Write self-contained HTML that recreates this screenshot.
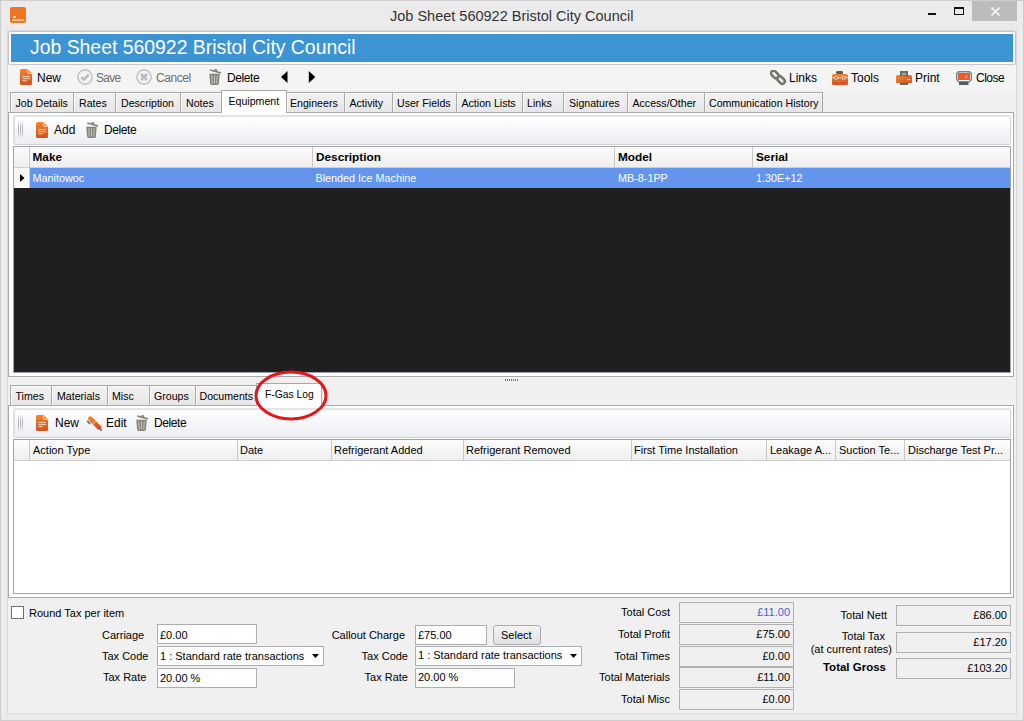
<!DOCTYPE html>
<html><head><meta charset="utf-8">
<style>
html,body{margin:0;padding:0;}
body{width:1024px;height:721px;overflow:hidden;position:relative;background:#ebebeb;font-family:"Liberation Sans",sans-serif;font-size:11px;color:#000;}
div,span,svg{box-sizing:border-box;}
.a{position:absolute;}
.t{position:absolute;white-space:nowrap;line-height:1;}
</style></head>
<body>
<div class="a" style="left:0px;top:0px;width:1024px;height:721px;border:1px solid #cdcdcd;background:#ebebeb;"></div>
<div class="a" style="left:10px;top:7px;width:16px;height:16px;background:#f07322;border-radius:2px;"></div>
<div class="a" style="left:13px;top:16px;width:3px;height:2px;background:#fbd9c0;"></div>
<div class="a" style="left:12px;top:19px;width:12px;height:2px;background:#f8c4a0;"></div>
<div class="t" style="left:390px;top:8.73px;font-size:14.5px;color:#333;">Job Sheet 560922 Bristol City Council</div>
<div class="a" style="left:928px;top:13px;width:8px;height:2px;background:#111;"></div>
<div class="a" style="left:954px;top:7px;width:10px;height:8px;border:1px solid #111;border-top-width:2px;"></div>
<div class="a" style="left:972px;top:1px;width:45px;height:20px;background:#bcbcbc;"></div>
<svg class="a" style="left:989.5px;top:6px" width="11" height="11"><path d="M1.5 1.5L9.5 9.5M9.5 1.5L1.5 9.5" stroke="#fff" stroke-width="1.5"/></svg>
<div class="a" style="left:7px;top:30px;width:1010px;height:684px;border:1px solid #d9d9d9;background:#f0f0f0;"></div>
<div class="a" style="left:8px;top:31px;width:1008px;height:34px;border:1px solid #c5c6cc;border-radius:2px;background:#fdfafa;"></div>
<div class="a" style="left:11px;top:34px;width:1002px;height:28px;background:#3d94d2;"></div>
<div class="t" style="left:30px;top:37.58px;font-size:19.4px;color:#fff;">Job Sheet 560922 Bristol City Council</div>
<div class="a" style="left:8px;top:65px;width:1008px;height:25px;background:#f4f4f4;"></div>
<svg class="a" style="left:20px;top:69px" width="12" height="16" viewBox="0 0 12 16"><defs><linearGradient id="og1" x1="0" y1="0" x2="0" y2="1"><stop offset="0" stop-color="#f5852a"/><stop offset="1" stop-color="#d24f1f"/></linearGradient></defs><path d="M1.5 0H7.5L12 4.5V14.5Q12 16 10.5 16H1.5Q0 16 0 14.5V1.5Q0 0 1.5 0Z" fill="url(#og1)"/><path d="M7.6 0.6V3.2Q7.6 4.4 8.8 4.4H11.6" stroke="#f7cfb3" stroke-width="1.1" fill="none"/><rect x="2.3" y="7" width="7.6" height="1.1" fill="#f8d2b8"/><rect x="2.3" y="9.1" width="7.6" height="1.1" fill="#f6ccb0"/><rect x="2.3" y="11.2" width="4.6" height="1.1" fill="#f2c2a4"/></svg>
<div class="t" style="left:37px;top:71.84px;font-size:12px;color:#000;">New</div>
<svg class="a" style="left:77px;top:69px" width="16" height="16" viewBox="0 0 16 16"><circle cx="8" cy="8" r="7.1" fill="none" stroke="#c4c4c4" stroke-width="1.6"/><path d="M4.3 8.2L6.9 10.7L11.8 5.6" fill="none" stroke="#bdbdbd" stroke-width="2.4"/></svg>
<div class="t" style="left:96px;top:71.84px;font-size:12px;color:#6e6e6e;letter-spacing:-0.7px;">Save</div>
<svg class="a" style="left:136px;top:69px" width="16" height="16" viewBox="0 0 16 16"><circle cx="8" cy="8" r="7.1" fill="none" stroke="#c4c4c4" stroke-width="1.6"/><path d="M5 5L11 11M11 5L5 11" fill="none" stroke="#bdbdbd" stroke-width="2.6"/></svg>
<div class="t" style="left:156px;top:71.84px;font-size:12px;color:#6e6e6e;letter-spacing:-0.45px;">Cancel</div>
<svg class="a" style="left:209px;top:69px" width="12" height="16" viewBox="0 0 12 16"><path d="M2 1.2L11.4 3.8" stroke="#7e7d75" stroke-width="1.7" stroke-linecap="round"/><path d="M5.6 1.9L6.2 0.6L7.6 1L7.4 2.4" stroke="#7e7d75" stroke-width="1.2" fill="none"/><path d="M0.3 4.8H10.7L9.9 14.6Q9.7 16 8.3 16H2.7Q1.3 16 1.1 14.6Z" fill="#82817a"/><path d="M2.8 6.3L3.2 14.6M5.5 6.3V14.6M8.2 6.3L7.8 14.6" stroke="#c6c5be" stroke-width="1.1"/></svg>
<div class="t" style="left:227px;top:71.84px;font-size:12px;color:#000;letter-spacing:-0.4px;">Delete</div>
<svg class="a" style="left:280px;top:70px" width="9" height="14"><path d="M7.5 1V13L1 7Z" fill="#000"/></svg>
<svg class="a" style="left:308px;top:70px" width="9" height="14"><path d="M0.8 1V13L7.3 7Z" fill="#000"/></svg>
<svg class="a" style="left:770px;top:70px" width="17" height="16" viewBox="0 0 17 16"><g fill="none" stroke="#75746b" stroke-width="2.5"><rect x="0.5" y="2" width="8.6" height="5" rx="2.5" transform="rotate(45 4.8 4.5)"/><rect x="6.7" y="7.5" width="8.6" height="5" rx="2.5" transform="rotate(45 11 10)"/></g></svg>
<div class="t" style="left:789px;top:71.84px;font-size:12px;color:#000;">Links</div>
<svg class="a" style="left:832px;top:71px" width="16" height="14" viewBox="0 0 16 14"><defs><linearGradient id="tg" x1="0" y1="0" x2="0" y2="1"><stop offset="0" stop-color="#f7892e"/><stop offset="1" stop-color="#d4501f"/></linearGradient></defs><path d="M4.2 3.5V1.2Q4.2 0 5.4 0H9.8Q11 0 11 1.2V3.5Z" fill="#5c5c58"/><rect x="0" y="3" width="16" height="11" rx="1.6" fill="url(#tg)"/><path d="M0 6.8H16" stroke="#e8d8cc" stroke-width="1"/><circle cx="4.2" cy="6.8" r="1.9" fill="#e8e4e0"/><circle cx="11.7" cy="6.8" r="1.9" fill="#e8e4e0"/><circle cx="4.2" cy="6.8" r="1.1" fill="#6f7a7e"/><circle cx="11.7" cy="6.8" r="1.1" fill="#6f7a7e"/></svg>
<div class="t" style="left:851px;top:71.84px;font-size:12px;color:#000;">Tools</div>
<svg class="a" style="left:896px;top:71px" width="16" height="14" viewBox="0 0 16 14"><defs><linearGradient id="pg" x1="0" y1="0" x2="1" y2="1"><stop offset="0" stop-color="#f7892e"/><stop offset="1" stop-color="#d4501f"/></linearGradient></defs><rect x="4" y="0" width="8" height="6" fill="#6f6f69"/><rect x="6" y="2" width="4" height="2" fill="#a8a8a2"/><path d="M1.5 4H4V5.3H12V4H14.5Q16 4 16 5.5V10.8Q16 12.3 14.5 12.3H1.5Q0 12.3 0 10.8V5.5Q0 4 1.5 4Z" fill="url(#pg)"/><rect x="11" y="8.2" width="3.5" height="1" fill="#f6e2d6"/><rect x="4" y="11.8" width="8" height="2.2" fill="#5f6a6a"/></svg>
<div class="t" style="left:915px;top:71.84px;font-size:12px;color:#000;">Print</div>
<svg class="a" style="left:956px;top:71px" width="16" height="14" viewBox="0 0 16 14"><path d="M2.5 0.7H13.5L15.3 2.5V8.8L13.5 10.6H2.5L0.7 8.8V2.5Z" fill="#fff" stroke="#6f8a8f" stroke-width="1.4"/><rect x="2" y="2" width="12" height="7" fill="#f05a24"/><path d="M8.6 7.6Q9.5 6 11.8 4.2Q11.2 6.8 9 7.3Z" fill="#fff"/><rect x="3" y="11" width="9.5" height="3" fill="#4d6266"/></svg>
<div class="t" style="left:976px;top:71.84px;font-size:12px;color:#000;letter-spacing:-0.5px;">Close</div>
<div class="a" style="left:8px;top:112px;width:1006px;height:265px;border:1px solid #a9a9a9;background:#fff;"></div>
<div class="a" style="left:10px;top:92px;width:64px;height:21px;border:1px solid #a9a9a9;background:linear-gradient(#f2f2f2,#e6e6e6);box-shadow:inset 1px 1px 0 #fafafa;"></div>
<div class="t" style="left:15.5px;top:98.03px;font-size:10.6px;color:#000;">Job Details</div>
<div class="a" style="left:73px;top:92px;width:43px;height:21px;border:1px solid #a9a9a9;background:linear-gradient(#f2f2f2,#e6e6e6);box-shadow:inset 1px 1px 0 #fafafa;"></div>
<div class="t" style="left:79px;top:98.03px;font-size:10.6px;color:#000;">Rates</div>
<div class="a" style="left:115px;top:92px;width:66px;height:21px;border:1px solid #a9a9a9;background:linear-gradient(#f2f2f2,#e6e6e6);box-shadow:inset 1px 1px 0 #fafafa;"></div>
<div class="t" style="left:121px;top:98.03px;font-size:10.6px;color:#000;">Description</div>
<div class="a" style="left:180px;top:92px;width:42px;height:21px;border:1px solid #a9a9a9;background:linear-gradient(#f2f2f2,#e6e6e6);box-shadow:inset 1px 1px 0 #fafafa;"></div>
<div class="t" style="left:186px;top:98.03px;font-size:10.6px;color:#000;">Notes</div>
<div class="a" style="left:286px;top:92px;width:59px;height:21px;border:1px solid #a9a9a9;background:linear-gradient(#f2f2f2,#e6e6e6);box-shadow:inset 1px 1px 0 #fafafa;"></div>
<div class="t" style="left:290px;top:98.03px;font-size:10.6px;color:#000;">Engineers</div>
<div class="a" style="left:344px;top:92px;width:49px;height:21px;border:1px solid #a9a9a9;background:linear-gradient(#f2f2f2,#e6e6e6);box-shadow:inset 1px 1px 0 #fafafa;"></div>
<div class="t" style="left:349.5px;top:98.03px;font-size:10.6px;color:#000;">Activity</div>
<div class="a" style="left:392px;top:92px;width:65px;height:21px;border:1px solid #a9a9a9;background:linear-gradient(#f2f2f2,#e6e6e6);box-shadow:inset 1px 1px 0 #fafafa;"></div>
<div class="t" style="left:397px;top:98.03px;font-size:10.6px;color:#000;">User Fields</div>
<div class="a" style="left:456px;top:92px;width:67px;height:21px;border:1px solid #a9a9a9;background:linear-gradient(#f2f2f2,#e6e6e6);box-shadow:inset 1px 1px 0 #fafafa;"></div>
<div class="t" style="left:461.5px;top:98.03px;font-size:10.6px;color:#000;">Action Lists</div>
<div class="a" style="left:522px;top:92px;width:42px;height:21px;border:1px solid #a9a9a9;background:linear-gradient(#f2f2f2,#e6e6e6);box-shadow:inset 1px 1px 0 #fafafa;"></div>
<div class="t" style="left:527px;top:98.03px;font-size:10.6px;color:#000;">Links</div>
<div class="a" style="left:563px;top:92px;width:65px;height:21px;border:1px solid #a9a9a9;background:linear-gradient(#f2f2f2,#e6e6e6);box-shadow:inset 1px 1px 0 #fafafa;"></div>
<div class="t" style="left:569px;top:98.03px;font-size:10.6px;color:#000;">Signatures</div>
<div class="a" style="left:627px;top:92px;width:78px;height:21px;border:1px solid #a9a9a9;background:linear-gradient(#f2f2f2,#e6e6e6);box-shadow:inset 1px 1px 0 #fafafa;"></div>
<div class="t" style="left:632.5px;top:98.03px;font-size:10.6px;color:#000;">Access/Other</div>
<div class="a" style="left:704px;top:92px;width:119px;height:21px;border:1px solid #a9a9a9;background:linear-gradient(#f2f2f2,#e6e6e6);box-shadow:inset 1px 1px 0 #fafafa;"></div>
<div class="t" style="left:709px;top:98.03px;font-size:10.6px;color:#000;">Communication History</div>
<div class="a" style="left:221px;top:90px;width:66px;height:23px;border:1px solid #a9a9a9;border-bottom:none;background:#fff;"></div>
<div class="t" style="left:228.5px;top:96.03px;font-size:10.6px;color:#000;">Equipment</div>
<div class="a" style="left:13px;top:115px;width:998px;height:30px;border:1px solid #e4e5e9;border-radius:2px;background:#fff;"></div>
<div class="a" style="left:14px;top:116px;width:997px;height:29px;border:1px solid #d0d2d8;border-top-color:#e2e3e7;border-left-color:#d8dae0;border-radius:2px;background:linear-gradient(#ffffff,#eceef2);"></div>
<div class="a" style="left:18px;top:120px;width:1px;height:19px;background:linear-gradient(rgba(180,182,192,0),#b4b6c0 35%,#b4b6c0 65%,rgba(180,182,192,0));"></div>
<div class="a" style="left:20px;top:120px;width:1px;height:19px;background:linear-gradient(rgba(180,182,192,0),#b4b6c0 35%,#b4b6c0 65%,rgba(180,182,192,0));"></div>
<div class="a" style="left:22px;top:120px;width:1px;height:19px;background:linear-gradient(rgba(180,182,192,0),#b4b6c0 35%,#b4b6c0 65%,rgba(180,182,192,0));"></div>
<svg class="a" style="left:36px;top:122px" width="12" height="16" viewBox="0 0 12 16"><defs><linearGradient id="og2" x1="0" y1="0" x2="0" y2="1"><stop offset="0" stop-color="#f5852a"/><stop offset="1" stop-color="#d24f1f"/></linearGradient></defs><path d="M1.5 0H7.5L12 4.5V14.5Q12 16 10.5 16H1.5Q0 16 0 14.5V1.5Q0 0 1.5 0Z" fill="url(#og2)"/><path d="M7.6 0.6V3.2Q7.6 4.4 8.8 4.4H11.6" stroke="#f7cfb3" stroke-width="1.1" fill="none"/><rect x="2.3" y="7" width="7.6" height="1.1" fill="#f8d2b8"/><rect x="2.3" y="9.1" width="7.6" height="1.1" fill="#f6ccb0"/><rect x="2.3" y="11.2" width="4.6" height="1.1" fill="#f2c2a4"/></svg>
<div class="t" style="left:54px;top:123.84px;font-size:12px;color:#000;">Add</div>
<svg class="a" style="left:86px;top:122px" width="12" height="16" viewBox="0 0 12 16"><path d="M2 1.2L11.4 3.8" stroke="#7e7d75" stroke-width="1.7" stroke-linecap="round"/><path d="M5.6 1.9L6.2 0.6L7.6 1L7.4 2.4" stroke="#7e7d75" stroke-width="1.2" fill="none"/><path d="M0.3 4.8H10.7L9.9 14.6Q9.7 16 8.3 16H2.7Q1.3 16 1.1 14.6Z" fill="#82817a"/><path d="M2.8 6.3L3.2 14.6M5.5 6.3V14.6M8.2 6.3L7.8 14.6" stroke="#c6c5be" stroke-width="1.1"/></svg>
<div class="t" style="left:104px;top:123.84px;font-size:12px;color:#000;letter-spacing:-0.4px;">Delete</div>
<div class="a" style="left:13px;top:146px;width:998px;height:227px;border:1px solid #a0a3ac;background:#1f1f1f;"></div>
<div class="a" style="left:14px;top:147px;width:996px;height:21px;background:linear-gradient(#fcfcfc,#eeeeee);border-bottom:1px solid #d0d0d0;"></div>
<div class="a" style="left:14px;top:168px;width:16px;height:20px;background:#f7f7f7;"></div>
<div class="a" style="left:30px;top:168px;width:980px;height:20px;background:#6495ed;"></div>
<div class="a" style="left:29px;top:147px;width:1px;height:21px;background:#c8c8c8;"></div>
<div class="a" style="left:312px;top:147px;width:1px;height:21px;background:#c8c8c8;"></div>
<div class="a" style="left:614px;top:147px;width:1px;height:21px;background:#c8c8c8;"></div>
<div class="a" style="left:752px;top:147px;width:1px;height:21px;background:#c8c8c8;"></div>
<div class="a" style="left:29px;top:168px;width:1px;height:20px;background:#d0d0d0;"></div>
<svg class="a" style="left:20px;top:174px" width="5" height="8"><path d="M0 0V8L4.5 4Z" fill="#000"/></svg>
<div class="t" style="left:32.5px;top:152.01px;font-size:11.8px;color:#000;font-weight:bold;">Make</div>
<div class="t" style="left:316px;top:152.01px;font-size:11.8px;color:#000;font-weight:bold;">Description</div>
<div class="t" style="left:618px;top:152.01px;font-size:11.8px;color:#000;font-weight:bold;">Model</div>
<div class="t" style="left:756px;top:152.01px;font-size:11.8px;color:#000;font-weight:bold;">Serial</div>
<div class="t" style="left:32.5px;top:172.86px;font-size:10.8px;color:#fff;">Manitowoc</div>
<div class="t" style="left:315.5px;top:172.86px;font-size:10.8px;color:#fff;">Blended Ice Machine</div>
<div class="t" style="left:618px;top:172.86px;font-size:10.8px;color:#fff;">MB-8-1PP</div>
<div class="t" style="left:756px;top:172.86px;font-size:10.8px;color:#fff;">1.30E+12</div>
<div class="a" style="left:505px;top:379px;width:1px;height:2px;background:#707482;"></div>
<div class="a" style="left:507px;top:379px;width:1px;height:2px;background:#707482;"></div>
<div class="a" style="left:509px;top:379px;width:1px;height:2px;background:#707482;"></div>
<div class="a" style="left:511px;top:379px;width:1px;height:2px;background:#707482;"></div>
<div class="a" style="left:513px;top:379px;width:1px;height:2px;background:#707482;"></div>
<div class="a" style="left:515px;top:379px;width:1px;height:2px;background:#707482;"></div>
<div class="a" style="left:517px;top:379px;width:1px;height:2px;background:#707482;"></div>
<div class="a" style="left:8px;top:405px;width:1006px;height:193px;border:1px solid #a9a9a9;background:#fff;"></div>
<div class="a" style="left:10px;top:385px;width:42px;height:21px;border:1px solid #a9a9a9;background:linear-gradient(#f2f2f2,#e6e6e6);box-shadow:inset 1px 1px 0 #fafafa;"></div>
<div class="t" style="left:15.5px;top:391.03px;font-size:10.6px;color:#000;">Times</div>
<div class="a" style="left:51px;top:385px;width:57px;height:21px;border:1px solid #a9a9a9;background:linear-gradient(#f2f2f2,#e6e6e6);box-shadow:inset 1px 1px 0 #fafafa;"></div>
<div class="t" style="left:57px;top:391.03px;font-size:10.6px;color:#000;">Materials</div>
<div class="a" style="left:107px;top:385px;width:43px;height:21px;border:1px solid #a9a9a9;background:linear-gradient(#f2f2f2,#e6e6e6);box-shadow:inset 1px 1px 0 #fafafa;"></div>
<div class="t" style="left:112px;top:391.03px;font-size:10.6px;color:#000;">Misc</div>
<div class="a" style="left:149px;top:385px;width:47px;height:21px;border:1px solid #a9a9a9;background:linear-gradient(#f2f2f2,#e6e6e6);box-shadow:inset 1px 1px 0 #fafafa;"></div>
<div class="t" style="left:154px;top:391.03px;font-size:10.6px;color:#000;">Groups</div>
<div class="a" style="left:195px;top:385px;width:62px;height:21px;border:1px solid #a9a9a9;background:linear-gradient(#f2f2f2,#e6e6e6);box-shadow:inset 1px 1px 0 #fafafa;"></div>
<div class="t" style="left:199.5px;top:391.03px;font-size:10.6px;color:#000;">Documents</div>
<div class="a" style="left:256px;top:383px;width:66px;height:23px;border:1px solid #a9a9a9;border-bottom:none;background:#fff;"></div>
<div class="t" style="left:265px;top:389.78px;font-size:10.3px;color:#000;">F-Gas Log</div>
<div class="a" style="left:13px;top:408px;width:998px;height:30px;border:1px solid #e4e5e9;border-radius:2px;background:#fff;"></div>
<div class="a" style="left:14px;top:409px;width:997px;height:29px;border:1px solid #d0d2d8;border-top-color:#e2e3e7;border-left-color:#d8dae0;border-radius:2px;background:linear-gradient(#ffffff,#eceef2);"></div>
<div class="a" style="left:18px;top:414px;width:1px;height:18px;background:linear-gradient(rgba(180,182,192,0),#b4b6c0 35%,#b4b6c0 65%,rgba(180,182,192,0));"></div>
<div class="a" style="left:20px;top:414px;width:1px;height:18px;background:linear-gradient(rgba(180,182,192,0),#b4b6c0 35%,#b4b6c0 65%,rgba(180,182,192,0));"></div>
<div class="a" style="left:22px;top:414px;width:1px;height:18px;background:linear-gradient(rgba(180,182,192,0),#b4b6c0 35%,#b4b6c0 65%,rgba(180,182,192,0));"></div>
<svg class="a" style="left:36px;top:415px" width="12" height="16" viewBox="0 0 12 16"><defs><linearGradient id="og3" x1="0" y1="0" x2="0" y2="1"><stop offset="0" stop-color="#f5852a"/><stop offset="1" stop-color="#d24f1f"/></linearGradient></defs><path d="M1.5 0H7.5L12 4.5V14.5Q12 16 10.5 16H1.5Q0 16 0 14.5V1.5Q0 0 1.5 0Z" fill="url(#og3)"/><path d="M7.6 0.6V3.2Q7.6 4.4 8.8 4.4H11.6" stroke="#f7cfb3" stroke-width="1.1" fill="none"/><rect x="2.3" y="7" width="7.6" height="1.1" fill="#f8d2b8"/><rect x="2.3" y="9.1" width="7.6" height="1.1" fill="#f6ccb0"/><rect x="2.3" y="11.2" width="4.6" height="1.1" fill="#f2c2a4"/></svg>
<div class="t" style="left:55px;top:416.84px;font-size:12px;color:#000;">New</div>
<svg class="a" style="left:86px;top:416px" width="17" height="16" viewBox="0 0 17 16"><defs><linearGradient id="eg" x1="0" y1="0" x2="1" y2="1"><stop offset="0" stop-color="#f8832a"/><stop offset="1" stop-color="#d4501f"/></linearGradient></defs><path d="M1.2 4.9L4.2 8" stroke="#676761" stroke-width="1.7"/><path d="M4.3 2.6L13 11.4" stroke="url(#eg)" stroke-width="4.6" stroke-linecap="round"/><path d="M6.5 8.3L10 4.8" stroke="#fbe3d2" stroke-width="0.8"/><path d="M14.2 13.2L15.6 14.6" stroke="#676761" stroke-width="1.8"/></svg>
<div class="t" style="left:106px;top:416.84px;font-size:12px;color:#000;">Edit</div>
<svg class="a" style="left:136px;top:415px" width="12" height="16" viewBox="0 0 12 16"><path d="M2 1.2L11.4 3.8" stroke="#7e7d75" stroke-width="1.7" stroke-linecap="round"/><path d="M5.6 1.9L6.2 0.6L7.6 1L7.4 2.4" stroke="#7e7d75" stroke-width="1.2" fill="none"/><path d="M0.3 4.8H10.7L9.9 14.6Q9.7 16 8.3 16H2.7Q1.3 16 1.1 14.6Z" fill="#82817a"/><path d="M2.8 6.3L3.2 14.6M5.5 6.3V14.6M8.2 6.3L7.8 14.6" stroke="#c6c5be" stroke-width="1.1"/></svg>
<div class="t" style="left:154px;top:416.84px;font-size:12px;color:#000;letter-spacing:-0.4px;">Delete</div>
<div class="a" style="left:13px;top:439px;width:998px;height:155px;border:1px solid #a0a3ac;background:#fff;"></div>
<div class="a" style="left:14px;top:440px;width:996px;height:21px;background:linear-gradient(#fcfcfc,#eeeeee);border-bottom:1px solid #d0d0d0;"></div>
<div class="a" style="left:29px;top:440px;width:1px;height:20px;background:#c8c8c8;"></div>
<div class="a" style="left:237px;top:440px;width:1px;height:20px;background:#c8c8c8;"></div>
<div class="a" style="left:331px;top:440px;width:1px;height:20px;background:#c8c8c8;"></div>
<div class="a" style="left:463px;top:440px;width:1px;height:20px;background:#c8c8c8;"></div>
<div class="a" style="left:631px;top:440px;width:1px;height:20px;background:#c8c8c8;"></div>
<div class="a" style="left:766px;top:440px;width:1px;height:20px;background:#c8c8c8;"></div>
<div class="a" style="left:835px;top:440px;width:1px;height:20px;background:#c8c8c8;"></div>
<div class="a" style="left:904px;top:440px;width:1px;height:20px;background:#c8c8c8;"></div>
<div class="t" style="left:33px;top:444.69px;font-size:11px;color:#000;">Action Type</div>
<div class="t" style="left:240px;top:444.69px;font-size:11px;color:#000;">Date</div>
<div class="t" style="left:334px;top:444.69px;font-size:11px;color:#000;">Refrigerant Added</div>
<div class="t" style="left:466px;top:444.69px;font-size:11px;color:#000;">Refrigerant Removed</div>
<div class="t" style="left:634px;top:444.69px;font-size:11px;color:#000;">First Time Installation</div>
<div class="t" style="left:770px;top:444.69px;font-size:11px;color:#000;">Leakage A...</div>
<div class="t" style="left:839px;top:444.69px;font-size:11px;color:#000;">Suction Te...</div>
<div class="t" style="left:908px;top:444.69px;font-size:11px;color:#000;">Discharge Test Pr...</div>
<svg class="a" style="left:250px;top:366px" width="84" height="60"><ellipse cx="41" cy="29.5" rx="35" ry="23.5" fill="none" stroke="#e8141b" stroke-width="3"/></svg>
<div class="a" style="left:11px;top:606px;width:13px;height:13px;border:1px solid #6f6f6f;background:#fff;"></div>
<div class="t" style="left:29px;top:607.69px;font-size:11px;color:#000;">Round Tax per item</div>
<div class="t" style="left:102px;top:629.69px;font-size:11px;color:#000;">Carriage</div>
<div class="t" style="left:102px;top:650.69px;font-size:11px;color:#000;">Tax Code</div>
<div class="t" style="left:103px;top:671.69px;font-size:11px;color:#000;">Tax Rate</div>
<div class="a" style="left:157px;top:624px;width:100px;height:20px;border:1px solid #abadb3;background:#fff;"></div>
<div class="t" style="left:160px;top:629.69px;font-size:11px;color:#000;">£0.00</div>
<div class="a" style="left:157px;top:646px;width:167px;height:20px;border:1px solid #abadb3;background:#fff;"></div>
<div class="t" style="left:160px;top:650.69px;font-size:11px;color:#000;">1 : Standard rate transactions</div>
<svg class="a" style="left:312px;top:654px" width="8" height="5"><path d="M0 0H7L3.5 4Z" fill="#000"/></svg>
<div class="a" style="left:157px;top:668px;width:100px;height:20px;border:1px solid #abadb3;background:#fff;"></div>
<div class="t" style="left:160px;top:672.69px;font-size:11px;color:#000;">20.00 %</div>
<div class="t" style="right:619px;top:629.69px;font-size:11px;color:#000;">Callout Charge</div>
<div class="t" style="right:616px;top:650.69px;font-size:11px;color:#000;">Tax Code</div>
<div class="t" style="right:616px;top:671.69px;font-size:11px;color:#000;">Tax Rate</div>
<div class="a" style="left:415px;top:625px;width:72px;height:20px;border:1px solid #abadb3;background:#fff;"></div>
<div class="t" style="left:418px;top:629.69px;font-size:11px;color:#000;">£75.00</div>
<div class="a" style="left:493px;top:625px;width:48px;height:20px;border:1px solid #a9abb0;border-radius:3px;background:linear-gradient(#f4f4f5,#dfe0e3);"></div>
<div class="t" style="left:501px;top:629.69px;font-size:11px;color:#000;">Select</div>
<div class="a" style="left:415px;top:646px;width:167px;height:20px;border:1px solid #abadb3;background:#fff;"></div>
<div class="t" style="left:418px;top:650.19px;font-size:11px;color:#000;">1 : Standard rate transactions</div>
<svg class="a" style="left:570px;top:654px" width="8" height="5"><path d="M0 0H7L3.5 4Z" fill="#000"/></svg>
<div class="a" style="left:415px;top:668px;width:100px;height:20px;border:1px solid #abadb3;background:#fff;"></div>
<div class="t" style="left:418px;top:672.19px;font-size:11px;color:#000;">20.00 %</div>
<div class="t" style="right:354px;top:606.69px;font-size:11px;color:#000;">Total Cost</div>
<div class="a" style="left:679px;top:602px;width:115px;height:21px;border:1px solid #b0b0b0;background:#efefef;"></div>
<div class="t" style="right:234px;top:606.69px;font-size:11px;color:#4a63d6;">£11.00</div>
<div class="t" style="right:354px;top:628.69px;font-size:11px;color:#000;">Total Profit</div>
<div class="a" style="left:679px;top:624px;width:115px;height:21px;border:1px solid #b0b0b0;background:#efefef;"></div>
<div class="t" style="right:234px;top:628.69px;font-size:11px;color:#000;">£75.00</div>
<div class="t" style="right:354px;top:650.69px;font-size:11px;color:#000;">Total Times</div>
<div class="a" style="left:679px;top:646px;width:115px;height:21px;border:1px solid #b0b0b0;background:#efefef;"></div>
<div class="t" style="right:234px;top:650.69px;font-size:11px;color:#000;">£0.00</div>
<div class="t" style="right:354px;top:671.69px;font-size:11px;color:#000;">Total Materials</div>
<div class="a" style="left:679px;top:667px;width:115px;height:21px;border:1px solid #b0b0b0;background:#efefef;"></div>
<div class="t" style="right:234px;top:671.69px;font-size:11px;color:#000;">£11.00</div>
<div class="t" style="right:354px;top:693.69px;font-size:11px;color:#000;">Total Misc</div>
<div class="a" style="left:679px;top:689px;width:115px;height:21px;border:1px solid #b0b0b0;background:#efefef;"></div>
<div class="t" style="right:234px;top:693.69px;font-size:11px;color:#000;">£0.00</div>
<div class="t" style="right:137px;top:609.69px;font-size:11px;color:#000;">Total Nett</div>
<div class="a" style="left:896px;top:605px;width:115px;height:21px;border:1px solid #b0b0b0;background:#efefef;"></div>
<div class="t" style="right:17px;top:609.69px;font-size:11px;color:#000;">£86.00</div>
<div class="t" style="right:139px;top:630.69px;font-size:11px;color:#000;">Total Tax</div>
<div class="t" style="right:132px;top:643.69px;font-size:11px;color:#000;">(at current rates)</div>
<div class="a" style="left:896px;top:632px;width:115px;height:21px;border:1px solid #b0b0b0;background:#efefef;"></div>
<div class="t" style="right:17px;top:636.69px;font-size:11px;color:#000;">£17.20</div>
<div class="t" style="right:138px;top:662.27px;font-size:11.5px;color:#000;font-weight:bold;">Total Gross</div>
<div class="a" style="left:896px;top:658px;width:115px;height:21px;border:1px solid #b0b0b0;background:#efefef;"></div>
<div class="t" style="right:17px;top:662.69px;font-size:11px;color:#000;">£103.20</div>
</body></html>
